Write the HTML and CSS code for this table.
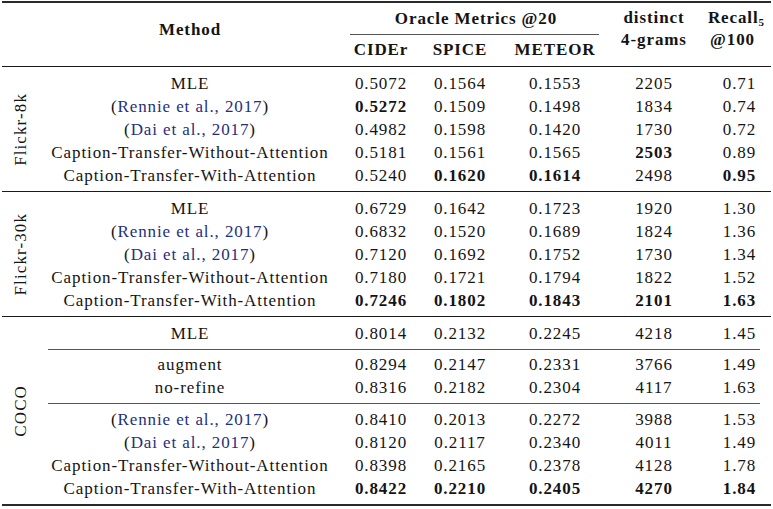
FILE: index.html
```html
<!DOCTYPE html>
<html>
<head>
<meta charset="utf-8">
<link rel="stylesheet" href="styles.css">
</head>
<body>
<div class="tbl">
  <div class="head">
    <div class="h-method">Method</div>
    <div class="h-oracle">Oracle Metrics @20<div class="cmid-o"></div></div>
    <div class="h-stack h-distinct"><div>distinct</div><div>4-grams</div></div>
    <div class="h-stack h-recall"><div class="rl1">Recall<sub>5</sub></div><div>@100</div></div>
    <div class="h-sub h-cider">CIDEr</div>
    <div class="h-sub h-spice">SPICE</div>
    <div class="h-sub h-meteor">METEOR</div>
  </div>

  <div class="section">
    <div class="group"><span>Flickr-8k</span></div>
    <div class="rows">
      <div class="row"><div>MLE</div><div>0.5072</div><div>0.1564</div><div>0.1553</div><div>2205</div><div>0.71</div></div>
      <div class="row"><div>(<span class="cite">Rennie et al., 2017</span>)</div><div class="b">0.5272</div><div>0.1509</div><div>0.1498</div><div>1834</div><div>0.74</div></div>
      <div class="row"><div>(<span class="cite">Dai et al., 2017</span>)</div><div>0.4982</div><div>0.1598</div><div>0.1420</div><div>1730</div><div>0.72</div></div>
      <div class="row"><div>Caption-Transfer-Without-Attention</div><div>0.5181</div><div>0.1561</div><div>0.1565</div><div class="b">2503</div><div>0.89</div></div>
      <div class="row"><div>Caption-Transfer-With-Attention</div><div>0.5240</div><div class="b">0.1620</div><div class="b">0.1614</div><div>2498</div><div class="b">0.95</div></div>
    </div>
  </div>

  <div class="section">
    <div class="group"><span>Flickr-30k</span></div>
    <div class="rows">
      <div class="row"><div>MLE</div><div>0.6729</div><div>0.1642</div><div>0.1723</div><div>1920</div><div>1.30</div></div>
      <div class="row"><div>(<span class="cite">Rennie et al., 2017</span>)</div><div>0.6832</div><div>0.1520</div><div>0.1689</div><div>1824</div><div>1.36</div></div>
      <div class="row"><div>(<span class="cite">Dai et al., 2017</span>)</div><div>0.7120</div><div>0.1692</div><div>0.1752</div><div>1730</div><div>1.34</div></div>
      <div class="row"><div>Caption-Transfer-Without-Attention</div><div>0.7180</div><div>0.1721</div><div>0.1794</div><div>1822</div><div>1.52</div></div>
      <div class="row"><div>Caption-Transfer-With-Attention</div><div class="b">0.7246</div><div class="b">0.1802</div><div class="b">0.1843</div><div class="b">2101</div><div class="b">1.63</div></div>
    </div>
  </div>

  <div class="section last">
    <div class="group"><span>COCO</span></div>
    <div class="rows">
      <div class="row"><div>MLE</div><div>0.8014</div><div>0.2132</div><div>0.2245</div><div>4218</div><div>1.45</div></div>
      <div class="cmid c1"></div>
      <div class="row"><div>augment</div><div>0.8294</div><div>0.2147</div><div>0.2331</div><div>3766</div><div>1.49</div></div>
      <div class="row"><div>no-refine</div><div>0.8316</div><div>0.2182</div><div>0.2304</div><div>4117</div><div>1.63</div></div>
      <div class="cmid c2"></div>
      <div class="row"><div>(<span class="cite">Rennie et al., 2017</span>)</div><div>0.8410</div><div>0.2013</div><div>0.2272</div><div>3988</div><div>1.53</div></div>
      <div class="row"><div>(<span class="cite">Dai et al., 2017</span>)</div><div>0.8120</div><div>0.2117</div><div>0.2340</div><div>4011</div><div>1.49</div></div>
      <div class="row"><div>Caption-Transfer-Without-Attention</div><div>0.8398</div><div>0.2165</div><div>0.2378</div><div>4128</div><div>1.78</div></div>
      <div class="row"><div>Caption-Transfer-With-Attention</div><div class="b">0.8422</div><div class="b">0.2210</div><div class="b">0.2405</div><div class="b">4270</div><div class="b">1.84</div></div>
    </div>
  </div>
</div>
</body>
</html>
```

FILE: styles.css
```css
* { box-sizing: border-box; }
html, body { margin: 0; padding: 0; background: #ffffff; }
body {
  font-family: "Liberation Serif", "Times New Roman", serif;
  font-size: 17px;
  letter-spacing: 0.9px;
  color: #141414;
}
.tbl {
  width: 769px;
  margin: 1px 0 0 2px;
  border-top: 2px solid #2a2a2a;
  border-bottom: 2px solid #2a2a2a;
}
.head {
  display: grid;
  grid-template-columns: 40px 296px 86px 72px 118px 80px 77px;
  grid-template-rows: 32px 31px;
  border-bottom: 1px solid #1a1a1a;
  font-weight: bold;
  line-height: 23px;
  text-align: center;
}
.h-method { grid-column: 2; grid-row: 1 / 3; padding-top: 15px; }
.h-oracle { grid-column: 3 / 6; grid-row: 1; padding-top: 4px; }
.cmid-o { height: 1px; background: #555; margin: 4px 15px 0 12px; }
.h-stack { grid-row: 1 / 3; padding-top: 4px; line-height: 22px; }
.h-distinct { grid-column: 6; }
.h-recall { grid-column: 7; }
.rl1 { padding-left: 7px; }
.rl1 sub { font-size: 11px; line-height: 0; vertical-align: -3px; letter-spacing: 0; }
.h-sub { grid-row: 2; padding-top: 3px; }
.h-cider { grid-column: 3; }
.h-spice { grid-column: 4; }
.h-meteor { grid-column: 5; }

.section { display: flex; border-bottom: 1px solid #1a1a1a; }
.section.last { border-bottom: none; }
.group {
  width: 40px;
  padding-right: 3px;
  display: flex;
  align-items: center;
  justify-content: center;
}
.group span {
  writing-mode: vertical-rl;
  transform: rotate(180deg);
  line-height: 19px;
  letter-spacing: 1.1px;
}
.rows { width: 729px; padding: 5px 0 4px; }
.row {
  display: grid;
  grid-template-columns: 296px 86px 72px 118px 80px 77px;
  height: 23px;
  line-height: 23px;
  text-align: center;
  white-space: nowrap;
}
.row > div:last-child { padding-left: 14px; }
.b { font-weight: bold; }
.cite { color: #1f2f80; }
.cmid { height: 1px; background: #555; margin: 4px 11px 3px 6px; }
.cmid.c2 { margin-bottom: 4px; }
```
